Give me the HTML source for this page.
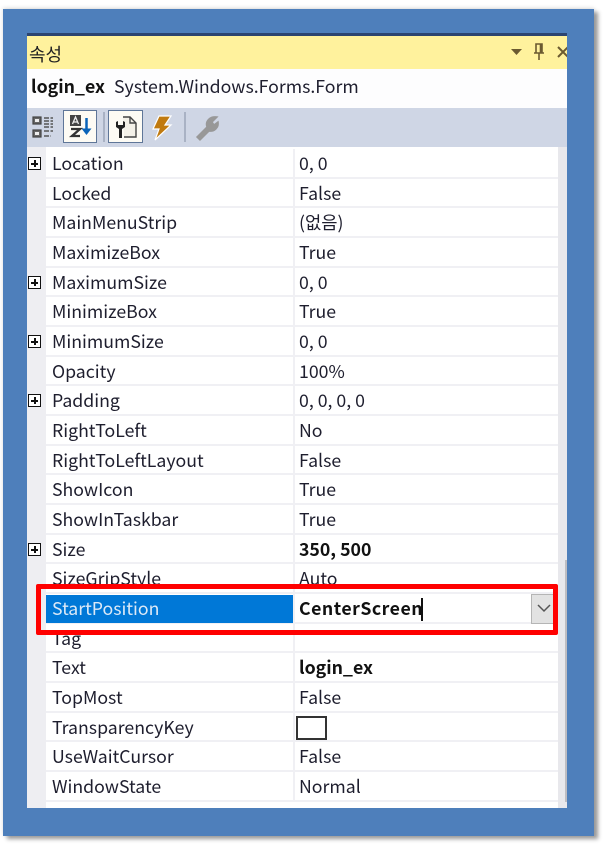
<!DOCTYPE html>
<html><head><meta charset="utf-8">
<style>
html,body{margin:0;padding:0;background:#fff;}
#p{position:relative;width:609px;height:845px;overflow:hidden;background:#fff;font-family:"Noto Sans CJK KR","Liberation Sans",sans-serif;font-size:17.7px;color:#1e1e2e;filter:blur(.35px);}
#blue{position:absolute;left:3px;top:9px;width:591px;height:827px;background:#4e7fbb;box-shadow:4px 3px 4px #999,0 -1px 4px #ddd;}
#in{position:absolute;left:27px;top:33px;width:540px;height:775px;background:#fff;overflow:hidden;}
#dark{position:absolute;left:0;top:0;width:540px;height:3px;background:#2b4470;}
#yel{position:absolute;left:0;top:3px;width:540px;height:33px;background:#fff29d;}
#yt{position:absolute;left:2px;top:4px;font-size:18px;line-height:28px;color:#222;}
#hd{position:absolute;left:0;top:36px;width:540px;height:39px;background:#fdfdfe;line-height:35px;white-space:nowrap;}
#hd b{position:absolute;left:4px;top:0;font-weight:700;color:#111;}
#hd span{position:absolute;left:87px;top:0;}
#tb{position:absolute;left:0;top:75px;width:540px;height:39px;background:#cfd6e5;}
#gut{position:absolute;left:0;top:114px;width:19px;height:661px;background:#eeeef2;}
#bar{position:absolute;left:531px;top:114px;width:9px;height:661px;background:#e8e8ec;}
#thumb{position:absolute;left:538px;top:527px;width:2px;height:242px;background:#bdbdc2;}
.r{position:absolute;left:19px;width:512px;height:29.67px;box-sizing:border-box;border-bottom:2px solid #f0f0f4;line-height:28.5px;white-space:nowrap;}
.r i{position:absolute;left:247px;top:0;width:2px;height:30px;background:#f0f0f4;}
.r span{position:absolute;left:6px;top:0;font-style:normal;}
.r em{position:absolute;left:253px;top:0;font-style:normal;}
.r em.b{font-weight:700;color:#111;}
.pl{position:absolute;left:1px;width:11px;height:11px;border:1.5px solid #111;background:#fff;}
.pl:before{content:"";position:absolute;left:2px;top:4.5px;width:7px;height:2px;background:#111;}
.pl:after{content:"";position:absolute;left:4.5px;top:2px;width:2px;height:7px;background:#111;}
#sel{position:absolute;left:19px;top:562px;width:247px;height:28px;background:#0078d7;color:#dbe9f7;line-height:27px;}
#sel span{position:absolute;left:6px;top:0;}
#dd{position:absolute;left:504px;top:561px;width:24px;height:30px;box-sizing:border-box;background:#e2e2e2;border:1.5px solid #b5b5b5;}
#caret{position:absolute;left:394px;top:565px;width:2px;height:23px;background:#111;}
#swatch{position:absolute;left:269px;top:683px;width:31px;height:24px;box-sizing:border-box;border:2px solid #333;background:#fff;}
#red{position:absolute;left:36px;top:584px;width:522px;height:51px;box-sizing:border-box;border:5px solid #f00;border-radius:2px;}
.btn{position:absolute;top:2px;width:34px;height:33px;box-sizing:border-box;border:1.5px solid #5f7698;background:#fdfbf4;}
.sep{position:absolute;top:4px;width:2px;height:30px;background:#a9b2c4;}
svg{position:absolute;overflow:visible;}
</style></head>
<body><div id="p">
<div id="blue"></div>
<div id="in">
<div id="dark"></div>
<div id="yel"><div id="yt">속성</div>
<svg style="left:483px;top:12px" width="14" height="8"><path d="M1 1H12L6.5 7Z" fill="#6b5a30"/></svg>
<svg style="left:505px;top:6px" width="14" height="20"><path d="M4 2H10V11H4ZM2 11H12M7 11V18M8.5 2V11" fill="none" stroke="#6b5a30" stroke-width="1.6"/></svg>
<svg style="left:530px;top:9px" width="12" height="14"><path d="M1 2L11 12M11 2L1 12" fill="none" stroke="#6b5a30" stroke-width="2"/></svg>
</div>
<div id="hd"><b>login_ex</b><span>System.Windows.Forms.Form</span></div>
<div id="tb">
<svg style="left:5px;top:8px" width="24" height="24"><g fill="none" stroke="#444" stroke-width="1.2"><rect x="1" y="1" width="8" height="7" fill="#666"/><rect x="1" y="14" width="8" height="7" fill="#666"/></g><rect x="3" y="3" width="4" height="3" fill="#eee"/><rect x="3" y="16" width="4" height="3" fill="#eee"/><path d="M12 2H21M12 5H21M12 8H21M12 11H21M12 15H21M12 20H19" stroke="#555" stroke-width="1.500" stroke-dasharray="5 1.5" fill="none"/></svg>
<div class="btn" style="left:36px"><svg style="left:5px;top:3px" width="24" height="25"><rect x="1" y="1" width="11" height="11" fill="#444"/><path d="M3.500 10L6.500 3L9.500 10M4.500 8H8.500" stroke="#eee" stroke-width="1.3" fill="none"/><path d="M2 15H11L3 22H11" stroke="#333" stroke-width="2.300" fill="none"/><path d="M17.500 4V19" stroke="#0a63b8" stroke-width="2.500"/><path d="M12.500 14.500H22.500L17.500 21Z" fill="#0a63b8"/></svg></div>
<div class="sep" style="left:76px"></div>
<div class="btn" style="left:81px;width:35px"><svg style="left:5px;top:3px" width="24" height="26"><path d="M9 3H16L22 9V23H10" fill="#f4f1e8" stroke="#444" stroke-width="1.4"/><path d="M16 3V9H22" fill="none" stroke="#444" stroke-width="1.400"/><path d="M2 8V13L5 15V24H8V15L11 13V8L9 7V11H4V7Z" fill="#222"/></svg></div>
<svg style="left:123px;top:7px" width="24" height="26"><path d="M9 1H21L15 10H21L5 25L9 14H3Z" fill="#c07a10" stroke="#fff" stroke-width="1.200"/></svg>
<div class="sep" style="left:157px"></div>
<svg style="left:167px;top:7px" width="26" height="26"><path d="M3 22L13 12C11 6 16 1 23 2L18 7L20 10L24 7C25 13 20 17 15 16L6 25Z" fill="#989898" stroke="#989898" stroke-width="1.500"/></svg>
</div>
<div id="gut"></div>
<div id="bar"></div><div id="thumb"></div>
<div class="r" style="top:116px"><span>Location</span><i></i><em>0, 0</em></div>
<div class="r" style="top:145.67px"><span>Locked</span><i></i><em>False</em></div>
<div class="r" style="top:175.33px"><span>MainMenuStrip</span><i></i><em>(없음)</em></div>
<div class="r" style="top:205px"><span>MaximizeBox</span><i></i><em>True</em></div>
<div class="r" style="top:234.67px"><span>MaximumSize</span><i></i><em>0, 0</em></div>
<div class="r" style="top:264.33px"><span>MinimizeBox</span><i></i><em>True</em></div>
<div class="r" style="top:294px"><span>MinimumSize</span><i></i><em>0, 0</em></div>
<div class="r" style="top:323.67px"><span>Opacity</span><i></i><em>100%</em></div>
<div class="r" style="top:353.33px"><span>Padding</span><i></i><em>0, 0, 0, 0</em></div>
<div class="r" style="top:383px"><span>RightToLeft</span><i></i><em>No</em></div>
<div class="r" style="top:412.67px"><span>RightToLeftLayout</span><i></i><em>False</em></div>
<div class="r" style="top:442.33px"><span>ShowIcon</span><i></i><em>True</em></div>
<div class="r" style="top:472px"><span>ShowInTaskbar</span><i></i><em>True</em></div>
<div class="r" style="top:501.67px"><span>Size</span><i></i><em class="b">350, 500</em></div>
<div class="r" style="top:531.33px"><span>SizeGripStyle</span><i></i><em>Auto</em></div>
<div class="r" style="top:561px"><i></i><em class="b" style="letter-spacing:.5px">CenterScreen</em></div>
<div class="r" style="top:590.67px"><span>Tag</span><i></i></div>
<div class="r" style="top:620.33px"><span>Text</span><i></i><em class="b">login_ex</em></div>
<div class="r" style="top:650px"><span>TopMost</span><i></i><em>False</em></div>
<div class="r" style="top:679.67px"><span>TransparencyKey</span><i></i></div>
<div class="r" style="top:709.33px"><span>UseWaitCursor</span><i></i><em>False</em></div>
<div class="r" style="top:739px"><span>WindowState</span><i></i><em>Normal</em></div>
<div class="pl" style="top:124px"></div>
<div class="pl" style="top:243px"></div>
<div class="pl" style="top:302px"></div>
<div class="pl" style="top:361px"></div>
<div class="pl" style="top:510px"></div>
<div id="sel"><span>StartPosition</span></div>
<div id="caret"></div>
<div id="dd"><svg style="left:5px;top:9px" width="14" height="9"><path d="M1 1L7 7L13 1" fill="none" stroke="#555" stroke-width="1.500"/></svg></div>
<div id="swatch"></div>
</div>
<div id="red"></div>
</div></body></html>
